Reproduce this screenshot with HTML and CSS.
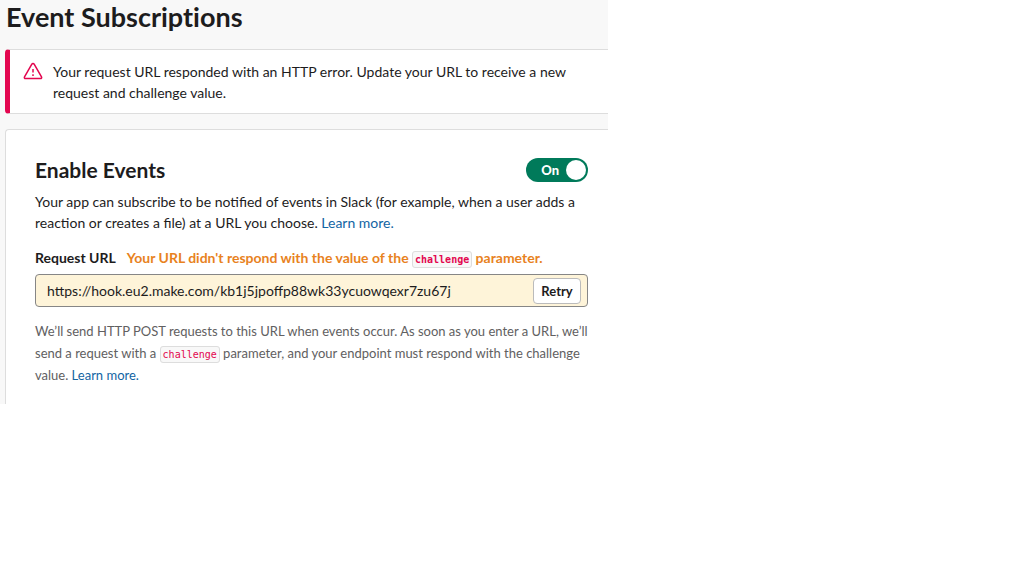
FILE: index.html
```html
<!DOCTYPE html>
<html lang="en">
<head>
  <meta charset="UTF-8">
  <meta name="viewport" content="width=device-width, initial-scale=1.0">
  <title>Event Subscriptions</title>
  <link rel="stylesheet" href="styles.css">
</head>
<body>
  <main class="page">
    <h1>Event Subscriptions</h1>

    <!-- Error Alert -->
    <div class="alert" role="alert">
      <svg class="alert-icon" viewBox="0 0 20 20" aria-hidden="true">
        <path d="M8.700 3.300 1.500 15.800c-.5.900.1 1.700 1 1.700h15c.9 0 1.500-.8 1-1.700L11.300 3.300c-.6-1-2-1-2.600 0Z"/>
        <path d="M10 8v3.600M10 13.200v1.800"/>
      </svg>
      <p>Your request URL responded with an HTTP error. Update your URL to receive a new request and challenge value.</p>
    </div>

    <!-- Enable Events Card -->
    <section class="card">
      <div class="card-header">
        <h2>Enable Events</h2>
        <label class="toggle">
          <input type="checkbox" aria-label="Enable Events" checked>
          <span class="toggle-text">On</span>
          <span class="toggle-knob"></span>
        </label>
      </div>
      <p class="card-text">Your app can subscribe to be notified of events in Slack (for example, when a user adds a reaction or creates a file) at a URL you choose. <a href="#">Learn more.</a></p>

      <div class="field-header">
        <label for="request-url">Request URL</label>
        <span class="warning">Your URL didn't respond with the value of the <code>challenge</code> parameter.</span>
      </div>
      <div class="url-field">
        <input type="text" id="request-url" value="https://hook.eu2.make.com/kb1j5jpoffp88wk33ycuowqexr7zu67j">
        <button type="button">Retry</button>
      </div>
      <p class="hint">We’ll send HTTP POST requests to this URL when events occur. As soon as you enter a URL, we’ll send a request with a <code>challenge</code> parameter, and your endpoint must respond with the challenge value. <a href="#">Learn more.</a></p>
    </section>
  </main>
</body>
</html>
```
FILE: styles.css
```css
/* Base Styling */
* {
  margin: 0;
  padding: 0;
  box-sizing: border-box;
}

body {
  font-family: Lato, sans-serif;
  font-size: 14px;
  line-height: 21px;
  color: #1d1c1d;
  background-color: #fff;
}

a {
  color: #1264a3;
  text-decoration: none;
}

a:hover {
  text-decoration: underline;
}

code {
  font-family: "DejaVu Sans Mono", monospace;
  font-size: 10px;
  line-height: 1;
  color: #e3064f;
  background-color: #f8f8f8;
  border: 1px solid #ddd;
  border-radius: 3px;
  padding: 2px;
}

.page {
  max-width: 608px;
  padding-left: 5px;
  background-color: #f8f8f8;
}

h1 {
  font-size: 27px;
  line-height: 34px;
  padding: 0 0 15px 1px;
  font-variant-ligatures: none;
}

/* Error Alert */
.alert {
  display: flex;
  gap: 10px;
  padding: 11px 20px 10px 13px;
  margin-bottom: 15px;
  background-color: #fff;
  border: 1px solid #ddd;
  border-left: 5px solid #e3064f;
  border-right: none;
  border-radius: 4px 0 0 4px;
}

.alert-icon {
  flex: none;
  width: 20px;
  height: 20px;
  fill: none;
  stroke: #e3064f;
  stroke-width: 1.5;
}

/* Enable Events Card */
.card {
  padding: 27px 20px 18px 29px;
  background-color: #fff;
  border: 1px solid #ddd;
  border-right: none;
  border-bottom: none;
  border-radius: 4px 0 0 0;
}

.card-header {
  display: flex;
  justify-content: space-between;
  align-items: center;
  margin-bottom: 8px;
}

h2 {
  font-size: 21px;
  line-height: 26px;
}

/* Toggle Switch */
.toggle {
  display: flex;
  align-items: center;
  justify-content: flex-end;
  gap: 7px;
  width: 62px;
  height: 24px;
  padding: 2px;
  border-radius: 12px;
  background-color: #007a5a;
  color: #fff;
  font-size: 13px;
  font-weight: 900;
  cursor: pointer;
}

.toggle input {
  appearance: none;
}

.toggle-knob {
  width: 20px;
  height: 20px;
  border-radius: 50%;
  background-color: #fff;
}

/* Request URL Field */
.field-header {
  display: flex;
  gap: 11px;
  margin: 14px 0 6px;
  font-weight: bold;
}

.warning {
  color: #e8821e;
}

.url-field {
  display: flex;
  align-items: center;
  height: 33px;
  padding: 0 6px 0 11px;
  background-color: #fef4d9;
  border: 1px solid #868686;
  border-radius: 4px;
}

.url-field input {
  flex: 1;
  min-width: 0;
  font: inherit;
  color: inherit;
  background: none;
  border: none;
  outline: none;
}

.url-field button {
  width: 48px;
  height: 26px;
  font: bold 13px Lato, sans-serif;
  color: #1d1c1d;
  background-color: #fff;
  border: 1px solid #bbb;
  border-radius: 4px;
  cursor: pointer;
}

.hint {
  margin-top: 13px;
  font-size: 13px;
  line-height: 22px;
  color: #616061;
}
```
